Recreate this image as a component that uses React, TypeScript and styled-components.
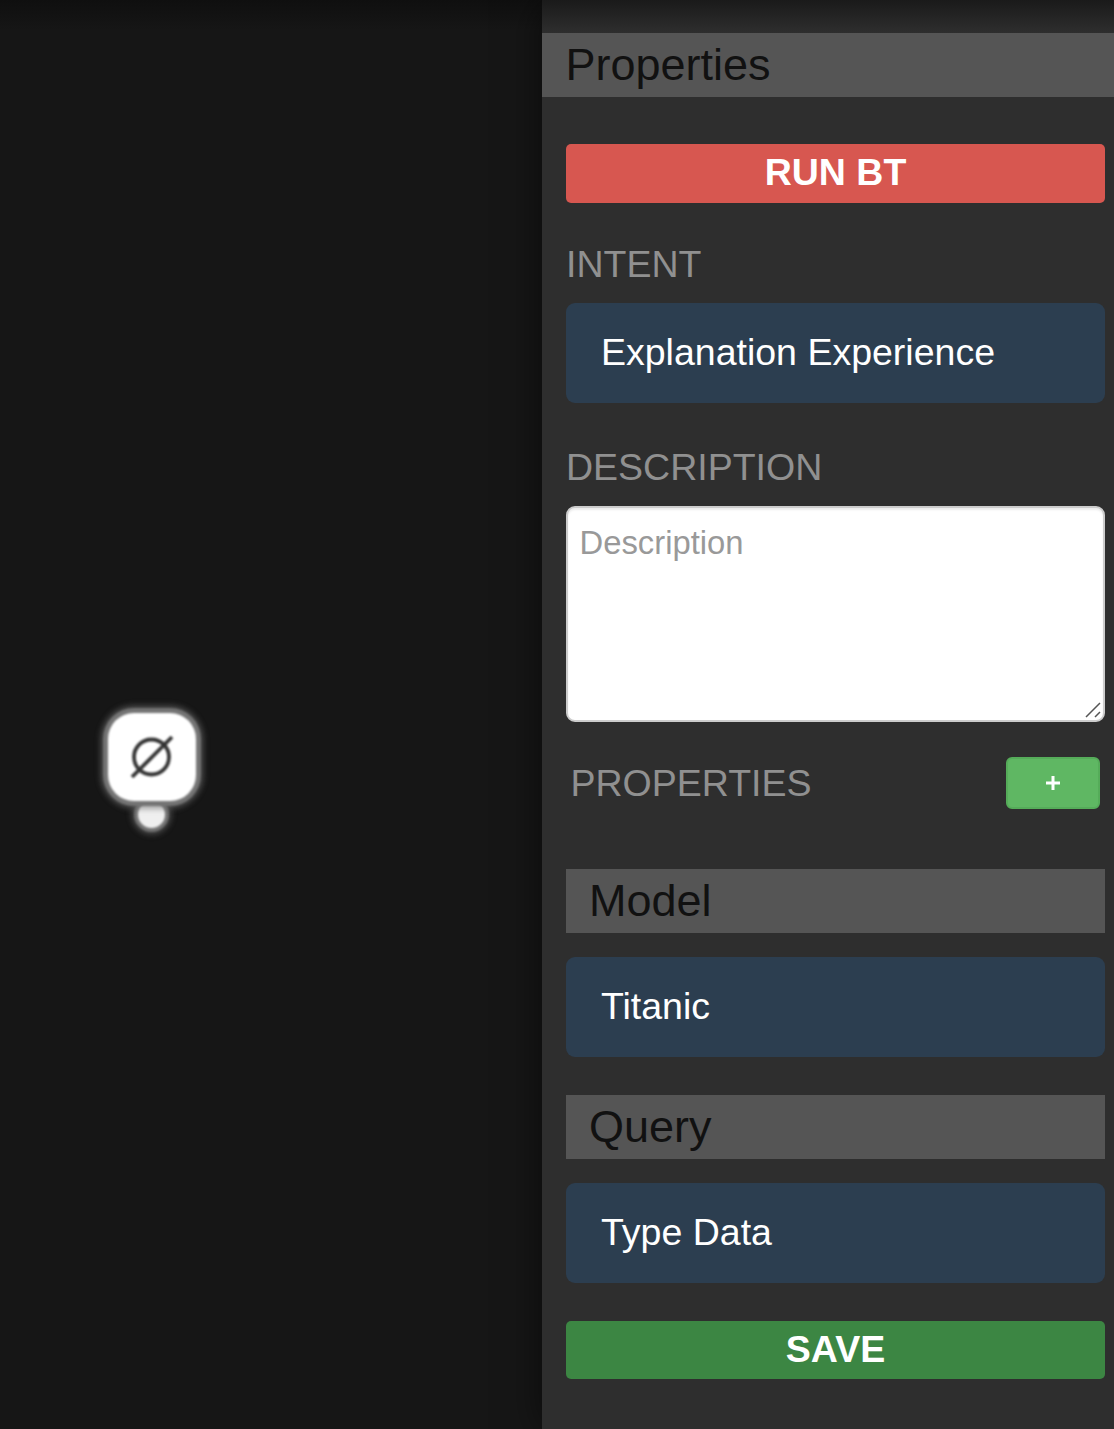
import { memo } from "react"
import styled, { createGlobalStyle } from "styled-components"

const GlobalStyle = createGlobalStyle`
  html, body {
    margin: 0;
    padding: 0;
    height: 1429px;
    overflow: hidden;
    background: #161616;
    font-family: "Liberation Sans", Arial, sans-serif;
  }
`

const Page = styled.div`
  display: flex;
  width: 1114px;
  height: 1429px;
`

const Canvas = styled.div`
  position: relative;
  flex: 0 0 542px;
  background: linear-gradient(#0f0f0f 0, #161616 30px);
`

const Node = styled.div`
  position: absolute;
  left: 108px;
  top: 713px;
  width: 88px;
  height: 88px;
  display: flex;
  align-items: center;
  justify-content: center;
  background: #fff;
  border-radius: 26px;
  box-shadow: 0 0 0 5px #747474, 0 0 5px 8px rgba(105, 105, 105, 0.55);
  filter: blur(0.8px);
`

const NodePort = styled.div`
  position: absolute;
  left: 138px;
  top: 801px;
  width: 27px;
  height: 27px;
  background: #efefef;
  border-radius: 50%;
  box-shadow: 0 0 0 4px #747474, 0 0 5px 7px rgba(105, 105, 105, 0.5);
  filter: blur(0.8px);
`

const Panel = styled.aside`
  flex: 1;
  display: flex;
  flex-flow: column;
  padding-top: 33px;
  background: linear-gradient(#1a1a1a 0, #2e2e2e 33px);
  box-shadow: 0 0 36px rgba(0, 0, 0, 0.55);
  z-index: 1;
`

const PanelTitle = styled.div`
  height: 64px;
  padding-left: 23.5px;
  background: #555;
  color: #111;
  font-size: 45px;
  line-height: 64px;
`

const PanelBody = styled.div`
  display: flex;
  flex-flow: column;
  padding: 47px 9px 0 24px;
`

const ActionButton = styled.div<{ $color: string; $height: number; $top?: number }>`
  height: ${props => props.$height}px;
  margin-top: ${props => props.$top ?? 0}px;
  background: ${props => props.$color};
  border-radius: 5px;
  color: #fff;
  font-size: 37.5px;
  font-weight: 700;
  line-height: ${props => props.$height - 2}px;
  text-align: center;
`

const Label = styled.div<{ $top: number }>`
  margin: ${props => props.$top}px 0 18px;
  height: 42px;
  color: #909090;
  font-size: 37.5px;
  line-height: 42px;
`

const Select = styled.div`
  height: 100px;
  padding-left: 35px;
  background: #2c3e50;
  border-radius: 9px;
  color: #fff;
  font-size: 37.5px;
  line-height: 98px;
`

const DescriptionBox = styled.div`
  position: relative;
  height: 216px;
`

const Description = styled.textarea`
  display: block;
  box-sizing: border-box;
  width: 539px;
  height: 216px;
  margin: 0;
  padding: 15px 11.5px;
  border: 2px solid #ccc;
  border-radius: 9px;
  outline: none;
  resize: none;
  background: #fff;
  box-shadow: inset 0 2px 2px rgba(0, 0, 0, 0.075);
  color: #555;
  font-family: "Liberation Sans", Arial, sans-serif;
  font-size: 32.8px;
  line-height: 40px;
  &::placeholder {
    color: #999;
    opacity: 1;
  }
`

const Resizer = styled.svg`
  position: absolute;
  right: 4px;
  bottom: 4px;
  pointer-events: none;
`

const PropertiesRow = styled.div`
  display: flex;
  align-items: center;
  justify-content: space-between;
  height: 52px;
  margin-top: 35px;
  padding: 0 5px 0 4.5px;
`

const PropertiesLabel = styled.span`
  color: #909090;
  font-size: 37.5px;
`

const AddButton = styled.div`
  box-sizing: border-box;
  width: 94px;
  height: 52px;
  display: flex;
  align-items: center;
  justify-content: center;
  background: #5fb763;
  border: 2px solid #55ac59;
  border-radius: 6px;
`

const SectionTitle = styled.div<{ $top: number }>`
  height: 64px;
  margin: ${props => props.$top}px 0 24px;
  padding-left: 23px;
  background: #555;
  color: #111;
  font-size: 45px;
  line-height: 64px;
`

const ZeroIcon = memo(() => (
  <svg width="44" height="44" viewBox="0 0 44 44" fill="none" stroke="#333" strokeWidth="3.8">
    <circle cx="21.5" cy="22" r="17.5" />
    <path d="M2 42 42 2" />
  </svg>
))

const PlusIcon = memo(() => (
  <svg width="14" height="14" viewBox="0 0 14 14" stroke="#fff" strokeWidth="3">
    <path d="M0 7h14M7 0v14" />
  </svg>
))

export default function App() {
  return (
    <Page>
      <GlobalStyle />
      <Canvas>
        <NodePort />
        <Node>
          <ZeroIcon />
        </Node>
      </Canvas>
      <Panel>
        <PanelTitle>Properties</PanelTitle>
        <PanelBody>
          <ActionButton $color="#d75750" $height={59}>RUN BT</ActionButton>
          <Label $top={40}>INTENT</Label>
          <Select>Explanation Experience</Select>
          <Label $top={43}>DESCRIPTION</Label>
          <DescriptionBox>
            <Description placeholder="Description" />
            <Resizer width="16" height="16" viewBox="0 0 16 16" stroke="#555" strokeWidth="1.5">
              <path d="M1 15 15 1M10 15l5-5" />
            </Resizer>
          </DescriptionBox>
          <PropertiesRow>
            <PropertiesLabel>PROPERTIES</PropertiesLabel>
            <AddButton>
              <PlusIcon />
            </AddButton>
          </PropertiesRow>
          <SectionTitle $top={60}>Model</SectionTitle>
          <Select>Titanic</Select>
          <SectionTitle $top={38}>Query</SectionTitle>
          <Select>Type Data</Select>
          <ActionButton $color="#3c8643" $height={58} $top={38}>SAVE</ActionButton>
        </PanelBody>
      </Panel>
    </Page>
  )
}
